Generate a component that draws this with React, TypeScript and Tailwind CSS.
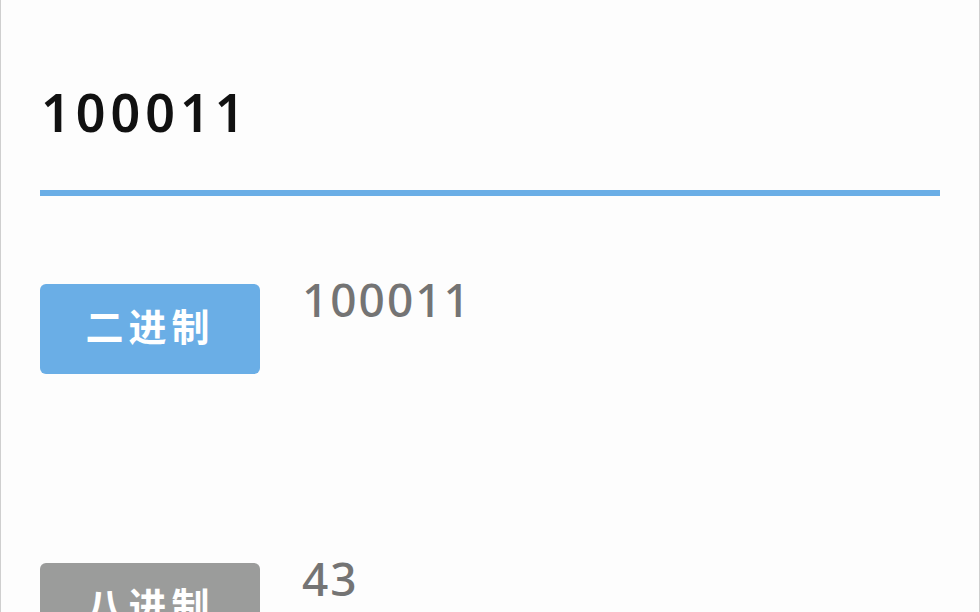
import React from 'react';

const rows = [
    { label: '二进制', value: '100011', active: true },
    { label: '八进制', value: '43', active: false },
];

export default function App() {
    return (
        <div
            className="h-[612px] w-[980px] overflow-hidden border-x border-[#cfcfcf] bg-[#fdfdfd] px-[39px] pt-[86px]"
            style={{ fontFamily: '"Noto Sans", "Noto Sans CJK SC", sans-serif' }}
        >
            {/* Input */}
            <div className="h-[110px] border-b-[6px] border-[#6aaee6]">
                <div className="ml-[1px] text-[52px] font-semibold leading-none tracking-[5px] text-[#111]">100011</div>
            </div>

            {/* Results */}
            <div className="mt-[88px] flex flex-col gap-[189px]">
                {rows.map((row) => (
                    <div key={row.label} className="flex items-start">
                        <div
                            className={`flex h-[90px] w-[220px] shrink-0 items-center justify-center rounded-md pb-[8px] text-[38px] font-bold leading-none tracking-[5px] text-white ${
                                row.active ? 'bg-[#6aaee6]' : 'bg-[#9b9c9b]'
                            }`}
                            style={{ fontFamily: '"Noto Sans CJK SC", sans-serif' }}
                        >
                            {row.label}
                        </div>
                        <div className="-mt-[8px] ml-[42px] text-[46px] font-medium leading-none tracking-[2px] text-[#747474]">
                            {row.value}
                        </div>
                    </div>
                ))}
            </div>
        </div>
    );
}
